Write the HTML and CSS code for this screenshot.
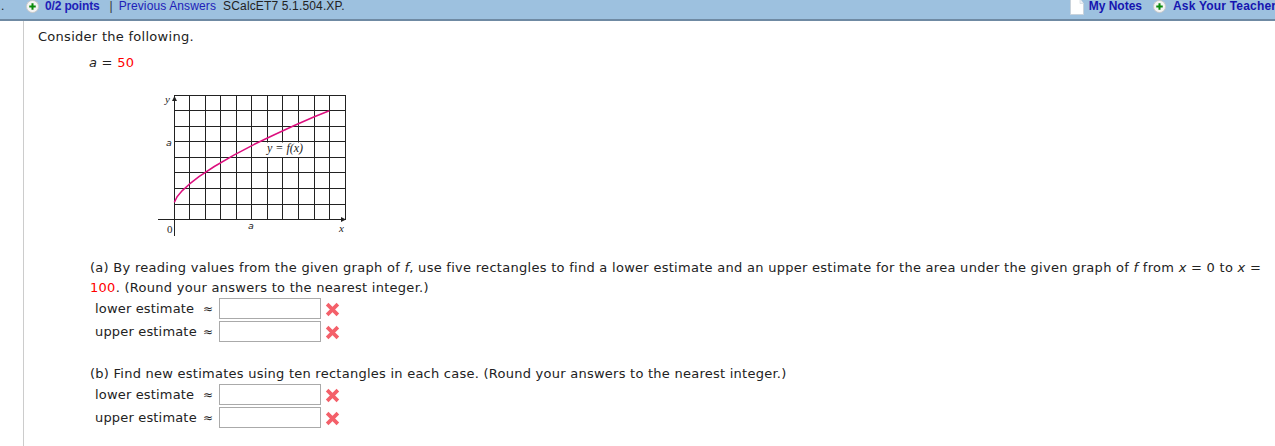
FILE: index.html
```html
<!DOCTYPE html>
<html>
<head>
<meta charset="utf-8">
<title>Question</title>
<link rel="stylesheet" href="styles.css">
</head>
<body>
<header class="bar">
  <span class="dot">.</span>
  <svg class="plus" viewBox="0 0 14 14"><circle cx="7" cy="7" r="6.5" fill="#f4f4f4" stroke="#c8c8c8"/><path d="M7 3.5v7M3.5 7h7" stroke="#0a8a0a" stroke-width="2.2"/></svg>
  <span class="link points">0/2 points</span>
  <span class="sep">|</span>
  <span class="link prev">Previous Answers</span>
  <span class="ref">SCalcET7 5.1.504.XP.</span>
  <span class="spacer"></span>
  <svg class="note" viewBox="0 0 14 15"><path d="M.5 -1H10L13.5 3.5V14.5H.5Z" fill="#fff" stroke="#c9d3dc"/><path d="M10 -1V3.5H13.5" fill="#eef1f4" stroke="#c9d3dc" stroke-width=".6"/></svg>
  <span class="link bold notes">My Notes</span>
  <svg class="plus ask" viewBox="0 0 14 14"><circle cx="7" cy="7" r="6.5" fill="#f4f4f4" stroke="#c8c8c8"/><path d="M7 3.5v7M3.5 7h7" stroke="#0a8a0a" stroke-width="2.2"/></svg>
  <span class="link bold teacher">Ask Your Teacher</span>
</header>
<main class="question">
  <p class="lead">Consider the following.</p>
  <p class="given"><i>a</i> = <span class="red">50</span></p>
  <svg class="graph" width="200" height="150" viewBox="150 90 200 150">
    <g class="grid">
      <path d="M174.5 95V236M189.5 95V220M205.5 95V220M220.5 95V220M236.5 95V220M251.5 95V220M267.5 95V220M282.5 95V220M298.5 95V220M314.5 95V220M329.5 95V220M345.5 95V220"/>
      <path d="M174 95.5H346M174 110.5H346M174 126.5H346M174 141.5H346M174 157.5H346M174 172.5H346M174 188.5H346M174 204.5H346M158 219.5H342"/>
    </g>
    <rect class="label-bg" x="267" y="142.5" width="38" height="14.5"/>
    <polyline class="curve" points="174.3,202.3 177.3,196.4 182.3,190.6 189.3,184.2 199.3,176.4 214.3,166.5 234.3,154.8 254.3,144.3 274.3,134.7 294.3,125.5 314.3,116.8 329.3,110.7"/>
    <path class="tips" d="M174.5 96L172 101H177ZM346 219.5L341 217V222Z"/>
    <text class="math" x="165" y="103">y</text>
    <text class="math up" x="166" y="146">a</text>
    <text class="math label" x="267" y="152">y = f(x)</text>
    <text class="math roman" x="167" y="233">0</text>
    <text class="math up" x="248" y="229">a</text>
    <text class="math" x="339" y="232">x</text>
  </svg>
  <section class="part">
    <p class="text wide">(a) By reading values from the given graph of <i>f</i>, use five rectangles to find a lower estimate and an upper estimate for the area under the given graph of <i>f</i> from <i>x</i> = 0 to <i>x</i> =<br><span class="red">100</span>. (Round your answers to the nearest integer.)</p>
    <div class="row"><label>lower estimate</label><span class="approx">≈</span><span class="box"></span><svg class="x" viewBox="0 0 14 14"><path d="M2 2L12 12M12 2L2 12"/></svg></div>
    <div class="row"><label>upper estimate</label><span class="approx">≈</span><span class="box"></span><svg class="x" viewBox="0 0 14 14"><path d="M2 2L12 12M12 2L2 12"/></svg></div>
  </section>
  <section class="part second">
    <p class="text">(b) Find new estimates using ten rectangles in each case. (Round your answers to the nearest integer.)</p>
    <div class="row"><label>lower estimate</label><span class="approx">≈</span><span class="box"></span><svg class="x" viewBox="0 0 14 14"><path d="M2 2L12 12M12 2L2 12"/></svg></div>
    <div class="row"><label>upper estimate</label><span class="approx">≈</span><span class="box"></span><svg class="x" viewBox="0 0 14 14"><path d="M2 2L12 12M12 2L2 12"/></svg></div>
  </section>
</main>
</body>
</html>
```
FILE: styles.css
```css
* { box-sizing: border-box; }
html, body { margin: 0; padding: 0; height: 446px; overflow: hidden; background: #fff; }
body { font-family: "DejaVu Sans", Verdana, sans-serif; font-size: 13px; color: #222; }
p { margin: 0; }
.bar { display: flex; align-items: flex-start; height: 21px; padding: 0; background: #9dc1df; border-bottom: 2px solid #6f8aa3; font-family: "Liberation Sans", Arial, sans-serif; font-size: 12px; line-height: 13px; white-space: nowrap; overflow: hidden; }
.dot { width: 26px; padding-left: 1px; color: #222; }
.plus { width: 13px; height: 13px; flex: none; }
.link { color: #2020b8; letter-spacing: .13px; }
.bold { font-weight: bold; color: #1515b0; }
.points { margin-left: 6px; font-weight: bold; letter-spacing: -.15px; }
.sep { margin-left: 10px; color: #333; }
.prev { margin-left: 6px; }
.ref { margin-left: 7px; color: #222; letter-spacing: .15px; }
.spacer { flex: 1; }
.note { width: 14px; height: 15px; flex: none; margin-right: 5px; }
.notes { margin-right: 11px; letter-spacing: 0; }
.ask { margin-right: 7px; }
.teacher { flex: none; width: 102px; letter-spacing: .2px; overflow: visible; }
.question { height: 425px; margin-left: 23px; padding-left: 14px; border-left: 1px solid #ccc; }
.lead { padding-top: 8px; line-height: 16px; letter-spacing: .28px; }
.given { margin-top: 10px; margin-left: 51px; line-height: 16px; letter-spacing: .25px; }
.red { color: #f00; }
.graph { display: block; margin: 19px 0 0 112px; }
.grid path { fill: none; stroke: #222; stroke-width: 1; }
.label-bg { fill: #fff; }
.curve { fill: none; stroke: #dc0f7e; stroke-width: 1.5; stroke-linejoin: round; }
.tips { fill: #222; }
.math { font-family: "Liberation Serif", serif; font-style: italic; font-size: 11px; fill: #222; }
.label { font-size: 12px; }
.up { font-family: "DejaVu Sans", sans-serif; font-size: 9.5px; }
.roman { font-style: normal; }
.part { margin-left: 52px; margin-top: 18px; width: 1190px; }
.second { margin-top: 21px; }
.text { line-height: 20px; letter-spacing: .25px; white-space: nowrap; margin-bottom: -1px; }
.wide { letter-spacing: .28px; }
.row { display: flex; align-items: center; height: 23px; margin-left: 5px; letter-spacing: .17px; }
.row label { width: 108px; }
.approx { width: 16px; font-size: 12px; }
.box { width: 102px; height: 21px; background: #fff; border: 1px solid #aaa; }
.x { width: 15px; height: 15px; margin: 2px 0 0 4px; }
.x path { fill: none; stroke: #f4606a; stroke-width: 3.4; }
```
